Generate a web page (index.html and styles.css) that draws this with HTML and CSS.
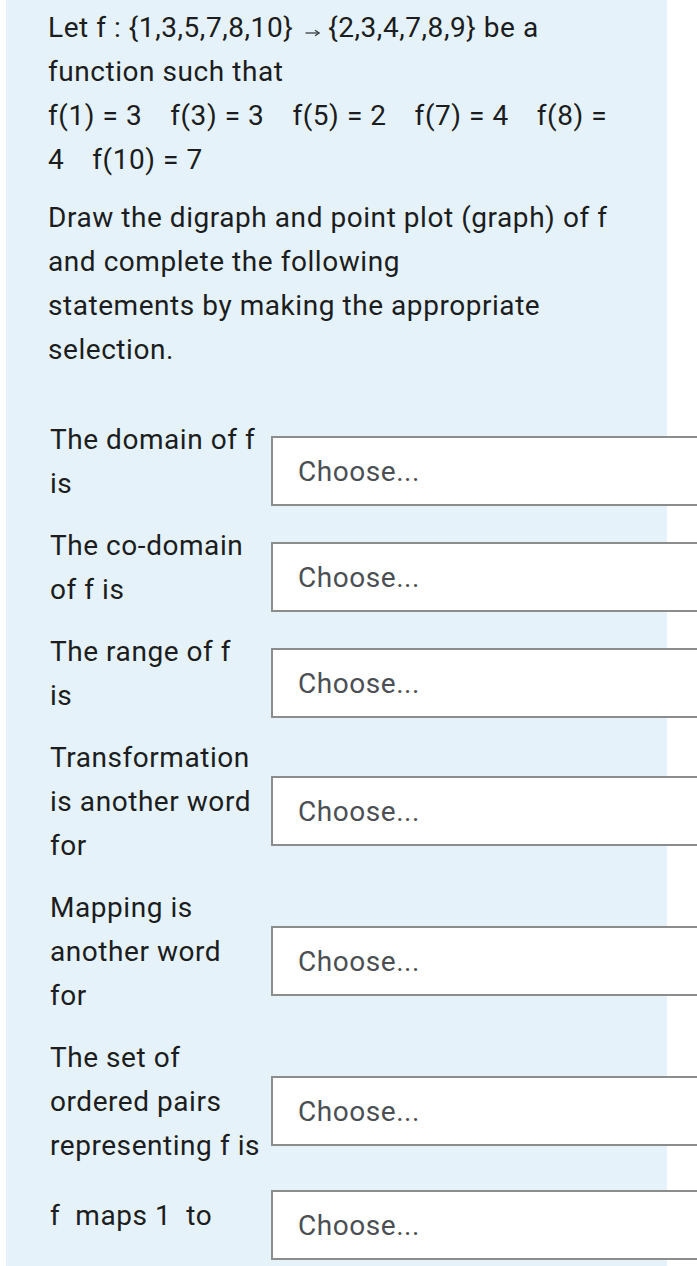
FILE: index.html
```html
<!DOCTYPE html>
<html>
<head>
<meta charset="utf-8">
<link rel="stylesheet" href="styles.css">
</head>
<body>
<div class="panel">
  <div class="qtext">
    <p class="intro">Let f : {1,3,5,7,8,10}<svg class="arrow" width="15" height="8" viewBox="0 0 15 8"><path d="M0.5 4H13.5" stroke="#3a3d40" stroke-width="1.3" fill="none"/><path d="M10 1.2L14.2 4L10 6.8" stroke="#3a3d40" stroke-width="1.3" fill="none"/></svg>{2,3,4,7,8,9} be a function such that<br>f(1) = 3<span class="gap"></span>f(3) = 3<span class="gap"></span>f(5) = 2<span class="gap"></span>f(7) = 4<span class="gap"></span>f(8) = 4<span class="gap"></span>f(10) = 7</p>
    <p class="task">Draw the digraph and point plot (graph) of f and complete the following<br>statements by making the appropriate selection.</p>
  </div>
  <div class="answers">
    <div class="row"><div class="label">The domain of f is</div><div class="select">Choose...</div></div>
    <div class="row"><div class="label">The co-domain of f is</div><div class="select">Choose...</div></div>
    <div class="row"><div class="label">The range of f<br>is</div><div class="select">Choose...</div></div>
    <div class="row"><div class="label">Transformation is another word for</div><div class="select">Choose...</div></div>
    <div class="row"><div class="label">Mapping is another word for</div><div class="select">Choose...</div></div>
    <div class="row"><div class="label">The set of ordered pairs representing f is</div><div class="select">Choose...</div></div>
    <div class="row last"><div class="label">f&nbsp; maps 1&nbsp; to</div><div class="select">Choose...</div></div>
  </div>
</div>
</body>
</html>
```

FILE: styles.css
```css
html, body {
  margin: 0;
  padding: 0;
  background: #ffffff;
  overflow: hidden;
}
body {
  width: 697px;
  height: 1266px;
  font-family: Roboto, "Liberation Sans", sans-serif;
  color: #1b1d20;
}
.panel {
  margin-left: 6px;
  width: 661px;
  height: 1266px;
  background: #e6f2f9;
  box-sizing: border-box;
  padding: 6px 0 0 42px;
}
.qtext p {
  margin: 0;
  font-size: 28px;
  letter-spacing: 0.55px;
  line-height: 44px;
  width: 574px;
}
.qtext .arrow {
  display: inline-block;
  vertical-align: 0;
  margin: 0 8px 0 12px;
}
.qtext .gap {
  display: inline-block;
  width: 28px;
}
.qtext .task {
  margin-top: 14px;
}
.answers {
  margin-top: 46px;
  padding-left: 2px;
  display: flex;
  flex-direction: column;
  gap: 18px;
}
.row {
  display: flex;
  align-items: center;
}
.row.last {
  margin-top: -14px;
}
.label {
  width: 214px;
  flex: none;
  font-size: 28px;
  letter-spacing: 0.55px;
  line-height: 44px;
}
.select {
  flex: none;
  margin-left: 7px;
  margin-top: 18px;
  width: 460px;
  height: 70px;
  box-sizing: border-box;
  border: 2px solid #8c8c8c;
  background: #ffffff;
  padding-left: 25px;
  display: flex;
  align-items: center;
  font-size: 28px;
  letter-spacing: 0.55px;
  color: #4b4f53;
}
```
